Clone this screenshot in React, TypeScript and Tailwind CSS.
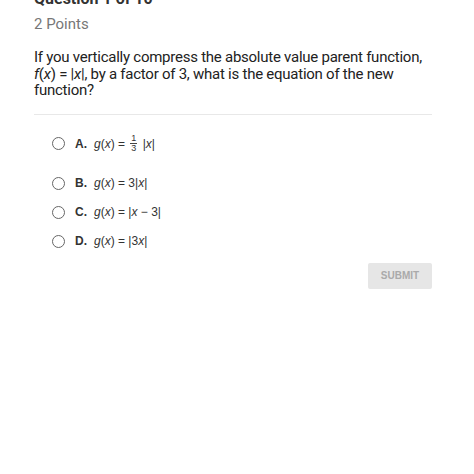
const options = [
  { letter: 'A', body: 'frac' },
  { letter: 'B', body: 'b' },
  { letter: 'C', body: 'c' },
  { letter: 'D', body: 'd' },
]

function G() {
  return (
    <>
      <i>g</i>(<i>x</i>) =&nbsp;
    </>
  )
}

function Formula({ kind }: { kind: string }) {
  if (kind === 'frac') {
    return (
      <span className="flex items-center">
        <G />
        <span className="inline-flex flex-col items-center text-[9px] leading-[9px] mx-[2px]">
          <span>1</span>
          <span className="border-t border-[#444] px-[1px]">3</span>
        </span>
        <span>&nbsp;|<i>x</i>|</span>
      </span>
    )
  }
  if (kind === 'b') return <span><G />3|<i>x</i>|</span>
  if (kind === 'c') return <span><G />|<i>x</i> − 3|</span>
  return <span><G />|3<i>x</i>|</span>
}

export default function App() {
  return (
    <div className="w-[474px] h-[474px] bg-white overflow-hidden font-['Roboto',sans-serif] text-[#333]">
      <div className="pl-[34px] pr-[40px]">
        <p className="text-[16px] font-bold leading-[20px] -mt-[11px]">Question 1 of 10</p>
        <p className="text-[15px] text-[#777] mt-[5px] leading-[20px]">2 Points</p>
        <p className="text-[15px] tracking-[-0.25px] leading-[16.5px] mt-[15px] text-[#222]">
          If you vertically compress the absolute value parent function, <i>f</i>(<i>x</i>) = |<i>x</i>|, by a factor of 3, what is the equation of the new function?
        </p>
        <div className="border-t border-[#e8e8e8] mt-[15px] mr-[2px]" />
        <div className="flex flex-col mt-[18px] pl-[18px] gap-[12px]">
          {options.map((o, i) => (
            <div key={o.letter} className={`flex items-center h-[17px] ${i === 0 ? 'mb-[8px] h-[22px]' : ''}`}>
              <span className="w-[13px] h-[13px] rounded-full border-[1.5px] border-[#666]" />
              <span className="ml-[10px] w-[19px] text-[12px] font-bold font-['Liberation_Sans',sans-serif]">{o.letter}.</span>
              <span className="text-[12px] font-['Liberation_Sans',sans-serif] text-[#333]">
                <Formula kind={o.body} />
              </span>
            </div>
          ))}
        </div>
        <div className="flex justify-end mt-[13px] mr-[2px]">
          <button className="w-[64px] h-[26px] bg-[#e6e6e6] text-[#aaa] text-[10px] font-bold rounded-[2px] font-['Liberation_Sans',sans-serif]">
            SUBMIT
          </button>
        </div>
      </div>
    </div>
  )
}
